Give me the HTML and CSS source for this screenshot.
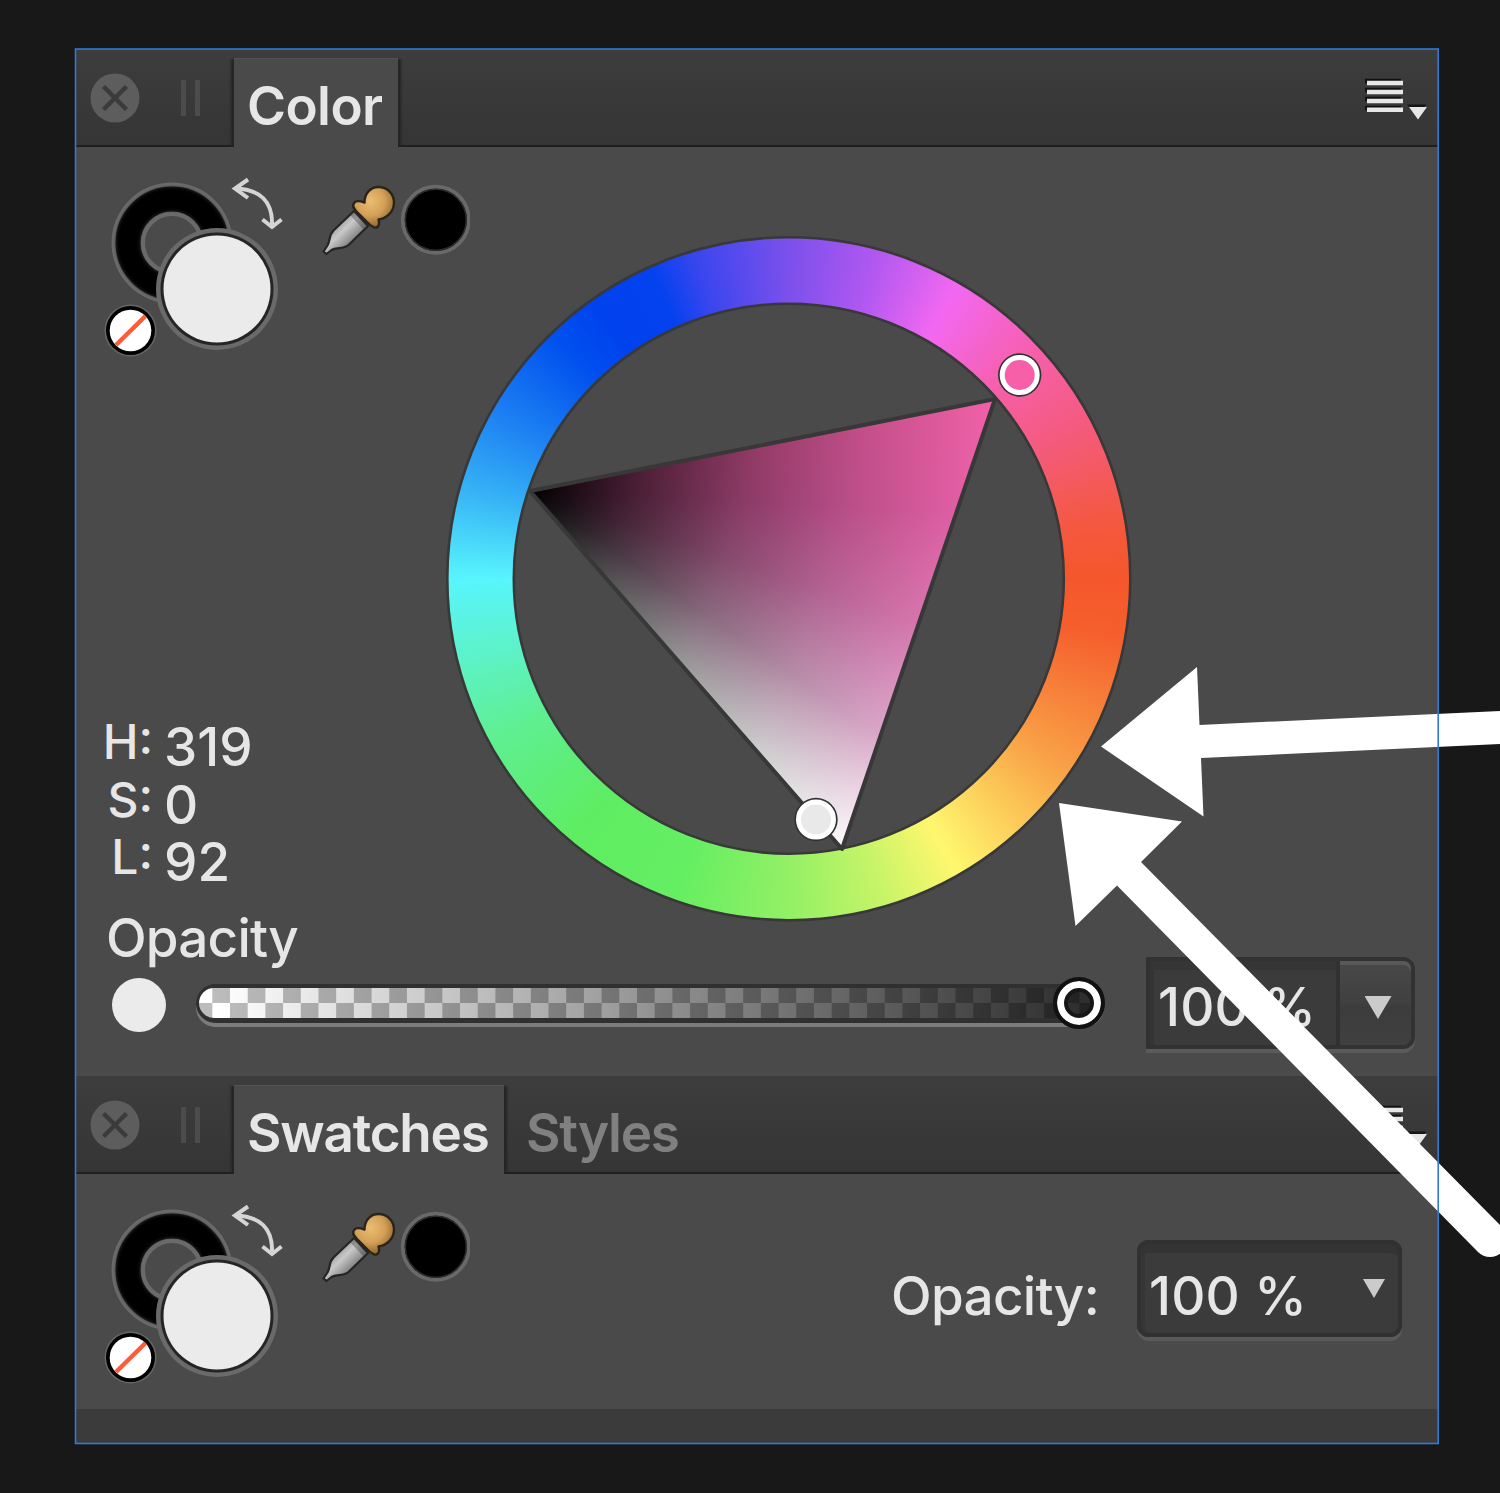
FILE: index.html
```html
<!DOCTYPE html>
<html lang="en">
<head>
<meta charset="utf-8">
<title>Color studio</title>
<link rel="stylesheet" href="styles.css">
</head>
<body>
<svg class="defs" width="0" height="0">
  <defs>
    <linearGradient id="glass" x1="0" y1="0" x2="1" y2="1"><stop offset=".25" stop-color="#8f8f8f"/><stop offset=".45" stop-color="#c9c9c9"/><stop offset=".75" stop-color="#6a6a6a"/></linearGradient>
    <radialGradient id="rubber" cx=".42" cy=".35" r=".65"><stop offset="0" stop-color="#edbd74"/><stop offset=".55" stop-color="#d3a057"/><stop offset="1" stop-color="#8f6429"/></radialGradient>
    <filter id="soft" x="-20%" y="-20%" width="140%" height="140%"><feGaussianBlur stdDeviation="1.4"/></filter>
    <symbol id="close" viewBox="0 0 50 50"><circle cx="25" cy="25" r="24.5" fill="#5d5d5d"/><path d="M13.5 13.5l23 23m0-23l-23 23" stroke="#3b3b3b" stroke-width="4.5"/></symbol>
    <symbol id="menu" viewBox="0 0 64 44">
      <path d="M1 3h36M1 12h36M1 21h36M1 30h36" stroke="#111" stroke-width="4.5"/>
      <path d="M43 26.500h19l-9 12z" fill="#151515"/>
      <path d="M3 5h36M3 14h36M3 23h36M3 31.800h36" stroke="#e6e6e6" stroke-width="4.6"/>
      <path d="M45 29h18l-9 12.500z" fill="#e6e6e6"/>
    </symbol>
    <symbol id="wells" viewBox="100 170 370 190">
      <circle cx="172" cy="243" r="60.500" fill="#6a6a6a"/>
      <circle cx="172" cy="243" r="44" fill="none" stroke="#222" stroke-width="25"/>
      <circle cx="172" cy="243" r="44" fill="none" stroke="#000" stroke-width="23" filter="url(#soft)"/>
      <circle cx="172" cy="243" r="29" fill="#4a4a4a" stroke="#6a6a6a" stroke-width="4"/>
      <circle cx="217" cy="289" r="61" fill="#6a6a6a"/>
      <circle cx="217" cy="289" r="56.500" fill="#252525"/>
      <circle cx="217" cy="289" r="53.500" fill="#ebebeb"/>
      <circle cx="130.500" cy="330.500" r="26" fill="#666"/>
      <circle cx="130.500" cy="330.500" r="24.500" fill="#000"/>
      <circle cx="130.500" cy="330.500" r="20.800" fill="#fff"/>
      <path d="M116 345l29.500-29" stroke="#ff5b3a" stroke-width="4.500"/>
      <path d="M248 179.500l-13 9 13 9.500M236 188.500c24 1 37 13 36 37M262.500 219.500l9.500 7.500 9.500-7.500" fill="none" stroke="#d5d5d5" stroke-width="4"/>
      <path d="M354 211l14 15-19.500 19c-5 4.500-12 2-17 5l-5 4-3-2.500 4-6c3-5 1-10 6-15z" fill="url(#glass)" stroke="#252525" stroke-width="2.200" stroke-linejoin="round"/>
      <path d="M354 211l14 15-4 4-14-15z" fill="#333" opacity=".35"/>
      <path d="M354.500 202.500c2-2.500 7-1 10 0 0-8 5-15.500 14-15.500 9 0 15.500 7 15.500 15.500 0 10-8 16-15.500 17 1 3 1 7-2 8-3 1-6-2-9-5l-11-11c-4-4-4-7-2-9z" fill="url(#rubber)" stroke="#29241c" stroke-width="2.400" stroke-linejoin="round"/>
      <circle cx="435.800" cy="219.800" r="33" fill="#000" stroke="#696969" stroke-width="4"/>
      <circle cx="435.800" cy="219.800" r="30.500" fill="none" stroke="#2d2d2d" stroke-width="1.500"/>
    </symbol>
  </defs>
</svg>

<main class="studio">
  <header class="tabbar">
    <svg class="close"><use href="#close"/></svg>
    <span class="grip"></span>
    <div class="tab"><span class="t-color">Color</span></div>
    <svg class="menu"><use href="#menu"/></svg>
  </header>
  <section class="color-panel">
    <div class="picker">
      <div class="side">
        <svg class="wells"><use href="#wells"/></svg>
        <dl class="hsl">
          <dt>H:</dt><dd>319</dd>
          <dt>S:</dt><dd>0</dd>
          <dt>L:</dt><dd>92</dd>
        </dl>
        <div class="opacity-label">Opacity</div>
      </div>
      <div class="wheel">
        <div class="hues"></div>
        <div class="shades"></div>
        <svg class="wheel-lines" viewBox="445 235 688 688">
          <g fill="none" stroke="#383838">
            <circle cx="788.800" cy="578.700" r="341.500" stroke-width="2.600"/>
            <circle cx="788.800" cy="578.700" r="275" stroke-width="2.600"/>
            <path d="M530 491L995 399 842 849z" stroke-width="4" stroke-linejoin="round"/>
          </g>
          <circle cx="1019.700" cy="375" r="21.700" fill="#333"/>
          <circle cx="1019.700" cy="375" r="17.500" fill="#f75fa9" stroke="#fff" stroke-width="5"/>
          <circle cx="816" cy="819.500" r="21.700" fill="#333"/>
          <circle cx="816" cy="819.500" r="17.500" fill="#e9e9e9" stroke="#fff" stroke-width="5"/>
        </svg>
      </div>
    </div>
    <div class="opacity-row">
      <span class="dot"></span>
      <div class="track"><div class="checker"></div><span class="knob"></span></div>
      <div class="combo"><span class="combo-value t-pct">100 %</span><span class="combo-button"><i class="arrow"></i></span></div>
    </div>
  </section>
  <header class="tabbar">
    <svg class="close"><use href="#close"/></svg>
    <span class="grip"></span>
    <div class="tab wide"><span class="t-swatches">Swatches</span></div>
    <div class="tab-idle t-styles">Styles</div>
    <svg class="menu"><use href="#menu"/></svg>
  </header>
  <section class="swatch-panel">
    <svg class="wells"><use href="#wells"/></svg>
    <span class="swatch-label">Opacity:</span>
    <div class="select"><span class="t-pct">100 %</span><i class="arrow small"></i></div>
  </section>
  <footer class="status"></footer>
</main>

<svg class="callouts" viewBox="0 0 1500 1493">
  <g fill="#fff">
    <path d="M1101 746.500L1197 667l2.500 58L1500 711v33l-299 14 2.500 58.500z"/>
    <path d="M1059 803l123 18.500-41 40.500 361 365v25a17 17 0 0 1-24 0L1117 885.500 1075.500 926z"/>
  </g>
  <rect x="75.500" y="49" width="1362.700" height="1394.500" fill="none" stroke="#2f7ad6" stroke-width="1.600"/>
</svg>
</body>
</html>
```
FILE: styles.css
```css
* { box-sizing: border-box; }
body {
  margin: 0;
  width: 1500px;
  height: 1493px;
  overflow: hidden;
  position: relative;
  background: #181818;
  color: #e6e6e6;
  font-family: Inter, "Liberation Sans", sans-serif;
  font-size: 53px;
  line-height: 64px;
  font-weight: 500;
  white-space: nowrap;
}
.defs { position: absolute; }
.studio {
  display: flex;
  flex-direction: column;
  width: 1362px;
  height: 1394px;
  margin: 49px 0 0 76px;
  background: #4a4a4a;
}
.tabbar {
  display: flex;
  height: 98px;
  flex: none;
  padding-right: 10px;
  background: linear-gradient(#3d3d3d, #353535);
  box-shadow: inset 0 -2px #1f1f1f;
}
.close { width: 50px; height: 50px; margin: 24px 0 0 14px; }
.grip {
  width: 19px;
  height: 36px;
  margin: 31px 0 0 41px;
  border: solid #4c4c4c;
  border-width: 0 5px;
}
.tab {
  width: 164px;
  height: 89px;
  margin: 9px 0 0 34px;
  padding: 16px 0 0 13px;
  background: #4a4a4a;
  box-shadow: inset 0 1px #525252, -4px 0 2px -1px #252525, 4px 0 2px -1px #252525;
  font-weight: 580;
  clip-path: inset(0 -6px 0 -6px);
}
.tab.wide { width: 270px; }
.tab-idle { margin: 25px 0 0 22px; color: #808080; font-weight: 580; }
.t-color { letter-spacing: -.6px; }
.t-swatches, .t-styles { letter-spacing: -1.2px; }
.menu { width: 64px; height: 44px; margin: 29px 0 0 auto; }

.color-panel { height: 929px; flex: none; }
.picker { display: flex; height: 815px; }
.side { display: flex; flex-direction: column; width: 369px; }
.wells { width: 370px; height: 190px; margin: 23px 0 0 24px; flex: none; }
.hsl {
  display: grid;
  grid-template-columns: 77px 1fr;
  grid-auto-rows: 57.5px;
  column-gap: 11px;
  margin: 359px 0 0;
}
.hsl dt { font-size: 48px; font-weight: 450; text-align: right; line-height: 45px; }
.hsl dd { margin: 0; line-height: 57.5px; letter-spacing: 0; }
.opacity-label { margin: 14px 0 0 30px; letter-spacing: -.8px; }

.wheel { display: grid; width: 688px; height: 688px; margin-top: 88px; flex: none; }
.wheel > * { grid-area: 1 / 1; }
.hues {
  background: conic-gradient(#7c50ec 0deg, #b058f0 15deg, #f368f1 30deg, #f65fa8 48deg, #f45b85 60deg, #f4583f 80deg, #f4572b 90deg, #f55f2d 100deg, #f9a247 125deg, #fcc858 136deg, #fff76e 150deg, #c6f468 164deg, #93f065 180deg, #65ee62 200deg, #5eed62 220deg, #5fef90 241deg, #5df2c8 256deg, #58f5fd 270deg, #35b0f5 286deg, #1c7ff2 300deg, #0050ee 316deg, #0042ee 325deg, #0442ee 336deg, #3a46ee 344deg, #7c50ec 360deg);
  clip-path: circle(341.5px at 343.8px 343.7px);
  mask: radial-gradient(circle at 343.8px 343.7px, transparent 274.5px, #000 275.5px);
}
.shades {
  width: 465px;
  height: 450px;
  margin: 164px 0 0 85px;
  background:
    linear-gradient(108.8deg, #000 30px, rgba(0,0,0,.67) 132px, rgba(0,0,0,.38) 235px, rgba(0,0,0,.17) 338px, rgba(0,0,0,0) 441px),
    conic-gradient(at 0 92px, #f261a9 0deg, #f261a9 79deg, #df5ea4 92.7deg, #d676ae 108.9deg, #dba8ca 125deg, #fcfafb 138.500deg, #fff 360deg);
  clip-path: polygon(0 92px, 465px 0, 312px 450px);
}
.wheel-lines { width: 688px; height: 688px; position: relative; }

.opacity-row { display: flex; height: 114px; }
.dot { width: 54px; height: 54px; margin: 16px 0 0 36px; border-radius: 50%; background: #ebebeb; }
.track {
  width: 908px;
  height: 39px;
  margin: 22px 0 0 30px;
  padding: 4px 4px 5px 3px;
  border-radius: 20px;
  background: #303030;
  box-shadow: 0 4px #7c7c7c;
  position: relative;
}
.checker {
  height: 30px;
  border-radius: 15px;
  background:
    linear-gradient(90deg, rgba(0,0,0,0) 2%, rgba(0,0,0,.44) 52%, rgba(0,0,0,.82) 98%),
    conic-gradient(#bcbcbc 25%, #fff 0 50%, #bcbcbc 0 75%, #fff 0) -4.400px 0 / 35.400px 30px;
}
.knob {
  position: absolute;
  left: 857px;
  top: -7px;
  width: 52px;
  height: 52px;
  border: 4px solid #111;
  border-radius: 50%;
  box-shadow: inset 0 0 0 7px #fff, inset 0 0 0 11px #161616;
}
.combo {
  display: flex;
  width: 269px;
  height: 92px;
  margin: -5px 0 0 42px;
  border: 4px solid #323232;
  border-radius: 0 12px 12px 0;
  background: #3b3b3b;
  box-shadow: 0 4px #5a5a5a;
}
.combo-value {
  width: 190px;
  padding: 14px 0 0 8px;
  border-right: 4px solid #313131;
  box-shadow: inset 4px 9px #353535;
}
.combo-button {
  display: flex;
  flex: 1;
  justify-content: center;
  padding: 35px 0 0 5px;
  border-radius: 0 8px 8px 0;
  background: linear-gradient(#484848, #404040 50%, #3c3c3c 55%, #404040);
  box-shadow: inset 0 4px #595959;
}
.arrow { width: 27px; height: 23px; background: #cbcbcb; clip-path: polygon(0 0, 100% 0, 50% 100%); }
.arrow.small { width: 22px; height: 19px; margin: 15px 0 0 auto; }
.t-pct { letter-spacing: .2px; }

.swatch-panel { display: flex; height: 235px; flex: none; }
.swatch-label { margin: 90px 0 0 421px; letter-spacing: -.7px; }
.select {
  display: flex;
  width: 265px;
  height: 97px;
  margin: 66px 36px 0 auto;
  padding: 24px 17px 0 12px;
  border-radius: 12px;
  background: #3b3b3b;
  box-shadow: 0 4px #5a5a5a, inset 0 0 0 4px #313131, inset 0 13px #343434, inset 8px 0 #363636;
}
.status { flex: 1; background: #3b3b3b; }
.callouts { position: absolute; inset: 0; width: 1500px; height: 1493px; }
```
